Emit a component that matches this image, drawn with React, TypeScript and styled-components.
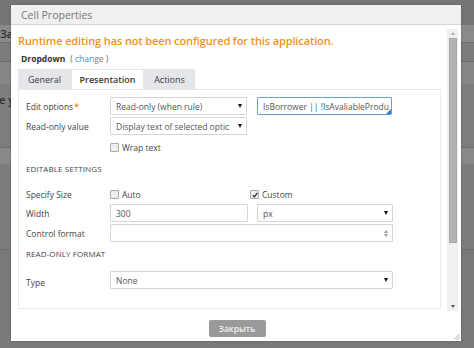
import React from 'react';
import styled, { createGlobalStyle } from 'styled-components';

const Global = createGlobalStyle`
  html, body { margin: 0; padding: 0; }
  body {
    width: 474px;
    height: 348px;
    overflow: hidden;
    background: #7b7b7b;
    font-family: "Open Sans", "Liberation Sans", sans-serif;
  }
`

const Page = styled.div`
  position: relative;
  width: 474px;
  height: 348px;
  overflow: hidden;
`

const Backdrop = styled.div`
  display: flex;
  flex-direction: column;
`

const BgRow = styled.div<{ $h: number; $tone: string; $line?: boolean }>`
  height: ${p => p.$h}px;
  background: ${p => p.$tone};
  border-bottom: ${p => (p.$line ? '1px solid #6c6c6c' : 'none')};
  box-sizing: border-box;
  font-size: 11px;
  font-weight: 600;
  color: #2e2e2e;
  display: flex;
  align-items: center;
  white-space: nowrap;
  overflow: hidden;
`

const Dialog = styled.div`
  position: absolute;
  left: 11px;
  top: 5px;
  width: 450px;
  height: 336px;
  background: #fff;
  display: flex;
  flex-direction: column;
  box-shadow: 0 0 2px rgba(0, 0, 0, 0.3);
`

const Header = styled.div`
  height: 20px;
  background: #f0f0f0;
  border-bottom: 1px solid #d6d6d6;
  box-sizing: border-box;
  padding-left: 10px;
  display: flex;
  align-items: center;
  font-size: 10.5px;
  color: #777;
`

const Body = styled.div`
  flex: 1;
  display: flex;
  min-height: 0;
`

const Content = styled.div`
  flex: 1;
  padding: 8px 7px 0 7px;
  display: flex;
  flex-direction: column;
  min-width: 0;
`

const Warning = styled.div`
  font-size: 11px;
  font-weight: 600;
  color: #f39220;
  letter-spacing: -0.12px;
  line-height: 16px;
`

const ControlLine = styled.div`
  margin: 3px 0 0 3px;
  font-size: 8.5px;
  line-height: 14px;
  color: #333;
  font-weight: 700;
  display: flex;
  gap: 5px;
  span { font-weight: 400; color: #666; }
  a { color: #4b8cc8; text-decoration: none; font-weight: 400; }
`

const Tabs = styled.div`
  margin-top: 3px;
  display: flex;
  height: 20px;
`

const Tab = styled.div<{ $active?: boolean; $w: number }>`
  width: ${p => p.$w}px;
  display: flex;
  align-items: center;
  justify-content: center;
  font-size: 9px;
  font-weight: ${p => (p.$active ? 600 : 400)};
  color: #3a3a3a;
  background: ${p => (p.$active ? '#fff' : '#e4e6ea')};
  border: 1px solid ${p => (p.$active ? '#e6e6e6' : '#e4e6ea')};
  border-bottom: none;
  box-sizing: border-box;
`

const Panel = styled.div`
  width: 423px;
  height: 220px;
  border: 1px solid #eaeaea;
  border-top-color: #e6e6e6;
  box-sizing: border-box;
  padding: 7px 0 0 7px;
  display: flex;
  flex-direction: column;
  gap: 2px;
`

const Row = styled.div<{ $h?: number; $bottom?: boolean }>`
  display: flex;
  align-items: ${p => (p.$bottom ? 'flex-end' : 'center')};
  height: ${p => p.$h ?? 18}px;
  flex-shrink: 0;
`

const Label = styled.div<{ $pb?: number }>`
  width: 84px;
  flex-shrink: 0;
  font-size: 8.5px;
  color: #444;
  white-space: nowrap;
  padding-bottom: ${p => p.$pb ?? 0}px;
  b { color: #f39220; font-weight: 700; margin-left: 1px; }
`

const Section = styled.div<{ $h: number }>`
  height: ${p => p.$h}px;
  display: flex;
  align-items: center;
  font-size: 8px;
  color: #444;
  letter-spacing: 0.1px;
  flex-shrink: 0;
`

const Field = styled.div<{ $w: number; $focus?: boolean }>`
  position: relative;
  width: ${p => p.$w}px;
  height: 18px;
  flex-shrink: 0;
  box-sizing: border-box;
  border: 1px solid ${p => (p.$focus ? '#6d9fd6' : '#d5d5d5')};
  border-radius: 1px;
  background: #fff;
  display: flex;
  align-items: center;
  padding-left: 5px;
  font-size: 8.5px;
  color: #555;
  white-space: nowrap;
  overflow: hidden;
`

const FieldText = styled.span`
  flex: 1;
  overflow: hidden;
`

const Arrow = styled.span`
  width: 0;
  height: 0;
  border-left: 2.5px solid transparent;
  border-right: 2.5px solid transparent;
  border-top: 4px solid #111;
  margin: 0 4px 0 4px;
`

const Spinner = styled.span`
  display: flex;
  flex-direction: column;
  gap: 1px;
  margin-right: 4px;
  i {
    width: 0;
    height: 0;
    border-left: 2px solid transparent;
    border-right: 2px solid transparent;
  }
  i:first-child { border-bottom: 3px solid #999; }
  i:last-child { border-top: 3px solid #999; }
`

const Corner = styled.span`
  position: absolute;
  right: 0;
  bottom: 0;
  width: 0;
  height: 0;
  border-left: 5px solid transparent;
  border-bottom: 5px solid #2f7fd6;
`

const Gap = styled.div<{ $w: number }>`
  width: ${p => p.$w}px;
  flex-shrink: 0;
`

const Check = styled.label<{ $w?: number; $pb?: number }>`
  display: flex;
  align-items: center;
  gap: 3px;
  width: ${p => (p.$w ? `${p.$w}px` : 'auto')};
  padding-bottom: ${p => p.$pb ?? 0}px;
  font-size: 8.5px;
  color: #444;
`

const Box = styled.span`
  width: 7px;
  height: 7px;
  border: 1px solid #aaa;
  background: #eee;
  border-radius: 1px;
  display: flex;
  align-items: center;
  justify-content: center;
`

const Scrollbar = styled.div`
  width: 11px;
  margin: 4px 3px 2px 0;
  background: #f0f0f0;
  display: flex;
  flex-direction: column;
  align-items: center;
`

const ScrollArrow = styled.span<{ $down?: boolean }>`
  width: 0;
  height: 0;
  margin: 3px 0;
  border-left: 2.5px solid transparent;
  border-right: 2.5px solid transparent;
  ${p => (p.$down ? 'border-top: 3px solid #555;' : 'border-bottom: 3px solid #aaa;')}
`

const Thumb = styled.div`
  width: 8px;
  height: 205px;
  background: #b3b3b3;
  border: 1px solid #a8a8a8;
  box-sizing: border-box;
`

const Fill = styled.div`
  flex: 1;
`

const Footer = styled.div`
  position: relative;
  height: 28px;
  display: flex;
  align-items: flex-start;
  justify-content: center;
  padding-top: 7px;
  box-sizing: border-box;
`

const Button = styled.div`
  width: 57px;
  height: 17px;
  margin-left: 2px;
  background: #9a9a9a;
  border-radius: 2px;
  color: #f2f2f2;
  font-size: 8.5px;
  font-weight: 600;
  display: flex;
  align-items: center;
  justify-content: center;
`

const Grip = styled.svg`
  position: absolute;
  right: 1px;
  bottom: 1px;
`

const CheckMark = () => (
  <svg width="6" height="6" viewBox="0 0 6 6">
    <path d="M0.8 3.2 L2.4 4.8 L5.4 1" fill="none" stroke="#333" strokeWidth="1.3" />
  </svg>
)

const App = () => {
  return (
    <Page>
      <Global />
      <Backdrop>
        <BgRow $h={25} $tone="#757575" />
        <BgRow $h={18} $tone="#8a8a8a" $line>За</BgRow>
        <BgRow $h={19} $tone="#7b7b7b" $line />
        <BgRow $h={22} $tone="#868686" />
        <BgRow $h={30} $tone="#7d7d7d">
          <span style={{ marginLeft: -1 }}>e y</span>
        </BgRow>
        <BgRow $h={34} $tone="#7d7d7d" $line />
        <BgRow $h={16} $tone="#888888" />
        <BgRow $h={86} $tone="#7c7c7c" $line />
        <BgRow $h={100} $tone="#7a7a7a" />
      </Backdrop>

      <Dialog>
        <Header>Cell Properties</Header>
        <Body>
          <Content>
            <Warning>Runtime editing has not been configured for this application.</Warning>
            <ControlLine>
              Dropdown
              <span>( <a>change</a> )</span>
            </ControlLine>
            <Tabs>
              <Tab $w={53}>General</Tab>
              <Tab $w={73} $active>Presentation</Tab>
              <Tab $w={51}>Actions</Tab>
            </Tabs>
            <Panel>
              <Row>
                <Label>Edit options<b>*</b></Label>
                <Field $w={137}>
                  <FieldText>Read-only (when rule)</FieldText>
                  <Arrow />
                </Field>
                <Gap $w={10} />
                <Field $w={135} $focus>
                  <FieldText>IsBorrower || !IsAvaliableProdu</FieldText>
                  <Corner />
                </Field>
              </Row>
              <Row>
                <Label>Read-only value</Label>
                <Field $w={137}>
                  <FieldText>Display text of selected optic</FieldText>
                  <Arrow />
                </Field>
              </Row>
              <Row $h={20}>
                <Gap $w={84} />
                <Check>
                  <Box />
                  Wrap text
                </Check>
              </Row>
              <Section $h={18}>EDITABLE SETTINGS</Section>
              <Row $h={23} $bottom>
                <Label $pb={2}>Specify Size</Label>
                <Check $w={140} $pb={2}>
                  <Box />
                  Auto
                </Check>
                <Check $pb={2}>
                  <Box><CheckMark /></Box>
                  Custom
                </Check>
              </Row>
              <Row>
                <Label>Width</Label>
                <Field $w={138}>
                  <FieldText>300</FieldText>
                </Field>
                <Gap $w={9} />
                <Field $w={136}>
                  <FieldText>px</FieldText>
                  <Arrow />
                </Field>
              </Row>
              <Row>
                <Label>Control format</Label>
                <Field $w={283}>
                  <FieldText />
                  <Spinner><i /><i /></Spinner>
                </Field>
              </Row>
              <Section $h={18}>READ-ONLY FORMAT</Section>
              <Row $h={25} $bottom>
                <Label $pb={1}>Type</Label>
                <Field $w={283}>
                  <FieldText>None</FieldText>
                  <Arrow />
                </Field>
              </Row>
            </Panel>
          </Content>
          <Scrollbar>
            <ScrollArrow />
            <Thumb />
            <Fill />
            <ScrollArrow $down />
          </Scrollbar>
        </Body>
        <Footer>
          <Button>Закрыть</Button>
          <Grip width="7" height="7" viewBox="0 0 7 7">
            <path d="M6.5 1 L1 6.5 M6.5 3.5 L3.5 6.5 M6.5 5.5 L5.5 6.5" stroke="#999" strokeWidth="0.8" />
          </Grip>
        </Footer>
      </Dialog>
    </Page>
  );
};

export default App;
